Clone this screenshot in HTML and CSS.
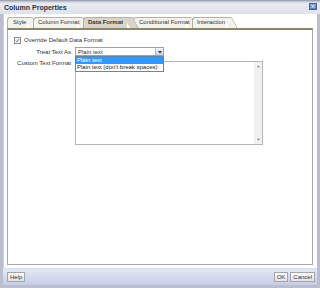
FILE: index.html
```html
<!DOCTYPE html>
<html>
<head>
<meta charset="utf-8">
<link rel="stylesheet" href="styles.css">
</head>
<body>
<div class="dialog">
  <div class="titlebar">
    <span class="title">Column Properties</span>
    <span class="close"><svg width="7" height="7" viewBox="0 0 7 7"><path d="M1.5 1.5 L5.5 5.5 M5.5 1.5 L1.5 5.5" stroke="#fff" stroke-width="1.2"/></svg></span>
  </div>
  <div class="content">
    <div class="tabs">
      <div class="tab t1">Style</div>
      <div class="tab t2">Column Format</div>
      <div class="tab t3 active">Data Format</div>
      <div class="tab t4">Conditional Format</div>
      <div class="tab t5">Interaction</div>
    </div>
    <div class="panel">
      <div class="check-row">
        <span class="checkbox"><svg width="7" height="7" viewBox="0 0 7 7"><path d="M1.3 3.6 L2.8 5.2 L5.8 1.6" stroke="#333" stroke-width="1" fill="none"/></svg></span>
        <span>Override Default Data Format</span>
      </div>
      <div class="form">
        <div class="row r1">
          <span class="label">Treat Text As</span>
          <div class="select-wrap">
            <div class="select">
              <span class="sel-text">Plain text</span>
              <span class="arrow"><svg width="6" height="6" viewBox="0 0 6 6"><path d="M1 2 L5 2 L3 4.5 Z" fill="#333"/></svg></span>
            </div>
            <div class="dropdown">
              <div class="opt hl">Plain text</div>
              <div class="opt">Plain text (don't break spaces)</div>
            </div>
          </div>
        </div>
        <div class="row r2">
          <span class="label">Custom Text Format</span>
          <div class="textarea">
            <div class="scroll">
              <svg width="5" height="5" viewBox="0 0 5 5"><path d="M1 3.2 L4 3.2 L2.5 1.4 Z" fill="#777"/></svg>
              <svg width="5" height="5" viewBox="0 0 5 5"><path d="M1 1.8 L4 1.8 L2.5 3.6 Z" fill="#777"/></svg>
            </div>
          </div>
        </div>
      </div>
    </div>
  </div>
  <div class="footer">
    <span class="btn">Help</span>
    <span class="spacer"></span>
    <span class="btn">OK</span>
    <span class="btn">Cancel</span>
  </div>
</div>
</body>
</html>
```
FILE: styles.css
```css
* { box-sizing: border-box; }
body {
  margin: 0;
  width: 320px;
  height: 288px;
  background: #a9afbf;
  font-family: "Liberation Sans", Arial, sans-serif;
  font-size: 6px;
  color: #333;
  overflow: hidden;
}
.dialog {
  width: 320px;
  height: 288px;
  display: flex;
  flex-direction: column;
  background: #b9bfce;
  padding: 0 3px 3px 3px;
}
.titlebar {
  height: 14px;
  margin: 0 -3px;
  padding: 0 3px 0 4px;
  display: flex;
  align-items: center;
  justify-content: space-between;
  background: linear-gradient(#c3c8d6 0, #c3c8d6 1px, #e9ebf0 2px, #dfe2ea 100%);
  border-top: 1px solid #9ca3b6;
}
.title {
  font-weight: bold;
  font-size: 7px;
  color: #2a3246;
}
.close {
  width: 8px;
  height: 7px;
  background: linear-gradient(#8fa8d6, #5877b4);
  border: 1px solid #4a64a0;
  display: flex;
  align-items: center;
  justify-content: center;
  margin-top: -2px;
}
.close svg { width: 6px; height: 5px; }
.content {
  flex: 1;
  background: #fff;
  display: flex;
  flex-direction: column;
  padding: 2px 4px 3px 3px;
  border-left: 1px solid #c9cdd8;
}
.tabs {
  display: flex;
  height: 12px;
  align-items: flex-end;
  padding-left: 0;
}
.tab {
  position: relative;
  flex: none;
  height: 11px;
  line-height: 11px;
  padding: 0 0 0 6px;
  color: #333;
  z-index: 1;
  margin-right: 6px;
  white-space: nowrap;
}
.tab::before {
  content: "";
  position: absolute;
  left: 0; top: 0; bottom: 0; right: 0;
  background: #f3f2ed;
  border-left: 1px solid #b5b1a4;
  border-top: 1px solid #b5b1a4;
  border-top-left-radius: 3px;
  z-index: -1;
}
.tab::after {
  content: "";
  position: absolute;
  top: 0; bottom: 0; right: -6px;
  width: 8px;
  background: #f3f2ed;
  border-top: 1px solid #b5b1a4;
  border-right: 1px solid #b5b1a4;
  border-top-right-radius: 2px;
  transform: skewX(28deg);
  transform-origin: top left;
  z-index: -1;
}
.tab.active { font-weight: bold; z-index: 2; }
.tab.active::before, .tab.active::after { background: #d8d5ca; }
.t1 { width: 20px; }
.t2 { width: 44px; padding-left: 5px; }
.t3 { width: 44px; padding-left: 5px; }
.t4 { width: 53px; }
.t5 { width: 34px; padding-left: 5px; }
.panel {
  flex: 1;
  border: 1px solid #a8a8a8;
  border-top: 2px solid #8e866c;
  padding: 6px 0 0 6px;
  display: flex;
  flex-direction: column;
}
.check-row {
  display: flex;
  align-items: center;
  gap: 3px;
  height: 8px;
}
.checkbox {
  width: 7px;
  height: 7px;
  border: 1px solid #8d8d8d;
  background: #f4f4f4;
  display: flex;
}
.checkbox svg { width: 5px; height: 5px; }
.form {
  display: flex;
  flex-direction: column;
  margin-top: 3px;
}
.row {
  display: flex;
}
.label {
  width: 61px;
  text-align: right;
  padding-right: 4px;
  flex: none;
}
.r1 { height: 9px; align-items: center; z-index: 5; }
.select-wrap {
  position: relative;
  width: 89px;
}
.select {
  height: 9px;
  border: 1px solid #a0a0a0;
  display: flex;
  align-items: center;
  justify-content: space-between;
  padding-left: 2px;
  background: #fff;
}
.arrow {
  width: 8px;
  height: 7px;
  background: linear-gradient(#f4f6fa, #c8d2e4);
  border-left: 1px solid #b0b8c8;
  display: flex;
  align-items: center;
  justify-content: center;
}
.dropdown {
  position: absolute;
  top: 9px;
  left: 0;
  width: 89px;
  background: #fff;
  border: 1px solid #7f7f7f;
  z-index: 10;
}
.opt {
  height: 7px;
  line-height: 7px;
  padding-left: 1px;
  color: #222;
}
.opt.hl { background: #3399ff; color: #fff; }
.r2 { margin-top: 0; align-items: flex-start; }
.r2 .label { margin-top: 4px; }
.textarea {
  margin-top: 5px;
  width: 188px;
  height: 84px;
  border: 1px solid #b5b5b5;
  display: flex;
  justify-content: flex-end;
}
.scroll {
  width: 8px;
  height: 100%;
  background: #f0f0f0;
  display: flex;
  flex-direction: column;
  justify-content: space-between;
  align-items: center;
  padding: 2px 0;
}
.footer {
  height: 17px;
  margin-top: 0;
  background: linear-gradient(#e4e8f4, #c5cce6);
  display: flex;
  align-items: center;
  padding: 0 2px 0 4px;
  gap: 2px;
  border-top: 1px solid #d8dcea;
}
.spacer { flex: 1; }
.btn {
  height: 10px;
  line-height: 8px;
  padding: 0 2px;
  border: 1px solid #a5a5a5;
  background: linear-gradient(#fbfbfb, #e3e3e3);
  color: #333;
  text-align: center;
}
.footer .btn:first-child { width: 18px; }
```
